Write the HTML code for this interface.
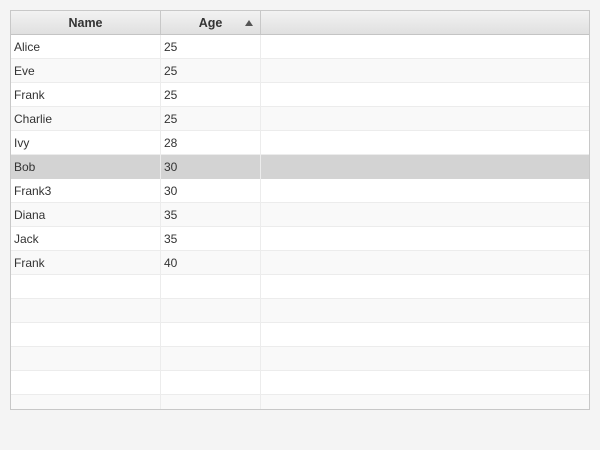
<!DOCTYPE html><html><head><style>
body{margin:0;width:600px;height:450px;background:#f4f4f4;position:relative;overflow:hidden;font-family:"Liberation Sans",sans-serif;font-size:12px;color:#333}
.t{position:absolute;left:10px;top:10px;width:578px;height:398px;border:1px solid #c8c8c8;background:#fff;overflow:hidden}
.h{position:absolute;left:0;top:0;width:578px;height:23px;background:linear-gradient(#f2f2f2,#e0e0e0);border-bottom:1px solid #c4c4c4}
.hc{position:absolute;top:0;height:23px;line-height:25px;text-align:center;font-weight:bold;border-right:1px solid #c8c8c8;box-sizing:border-box;font-size:12.5px}
.r{position:absolute;left:0;width:578px;height:23px;border-bottom:1px solid #ececec}
.r span{position:absolute;top:0;line-height:24px}
.v{position:absolute;top:24px;bottom:0;width:1px;background:#ececec}
</style></head><body>
<div class="t">
<div class="h">
<div class="hc" style="left:0;width:150px">Name</div>
<div class="hc" style="left:150px;width:100px">Age<span style="position:absolute;right:7px;top:9px;width:0;height:0;border-left:4px solid transparent;border-right:4px solid transparent;border-bottom:6px solid #555"></span></div>
</div>
<div class="r" style="top:24px;background:#fff"><span style="left:3px">Alice</span><span style="left:153px">25</span></div>
<div class="r" style="top:48px;background:#f9f9f9"><span style="left:3px">Eve</span><span style="left:153px">25</span></div>
<div class="r" style="top:72px;background:#fff"><span style="left:3px">Frank</span><span style="left:153px">25</span></div>
<div class="r" style="top:96px;background:#f9f9f9"><span style="left:3px">Charlie</span><span style="left:153px">25</span></div>
<div class="r" style="top:120px;background:#fff"><span style="left:3px">Ivy</span><span style="left:153px">28</span></div>
<div class="r" style="top:144px;background:#d3d3d3;border-color:#d3d3d3"><span style="left:3px">Bob</span><span style="left:153px">30</span></div>
<div class="r" style="top:168px;background:#fff"><span style="left:3px">Frank3</span><span style="left:153px">30</span></div>
<div class="r" style="top:192px;background:#f9f9f9"><span style="left:3px">Diana</span><span style="left:153px">35</span></div>
<div class="r" style="top:216px;background:#fff"><span style="left:3px">Jack</span><span style="left:153px">35</span></div>
<div class="r" style="top:240px;background:#f9f9f9"><span style="left:3px">Frank</span><span style="left:153px">40</span></div>
<div class="r" style="top:264px;background:#fff"></div>
<div class="r" style="top:288px;background:#f9f9f9"></div>
<div class="r" style="top:312px;background:#fff"></div>
<div class="r" style="top:336px;background:#f9f9f9"></div>
<div class="r" style="top:360px;background:#fff"></div>
<div class="r" style="top:384px;background:#f9f9f9"></div>
<div class="v" style="left:149px"></div>
<div class="v" style="left:249px"></div>
</div>
</body></html>
